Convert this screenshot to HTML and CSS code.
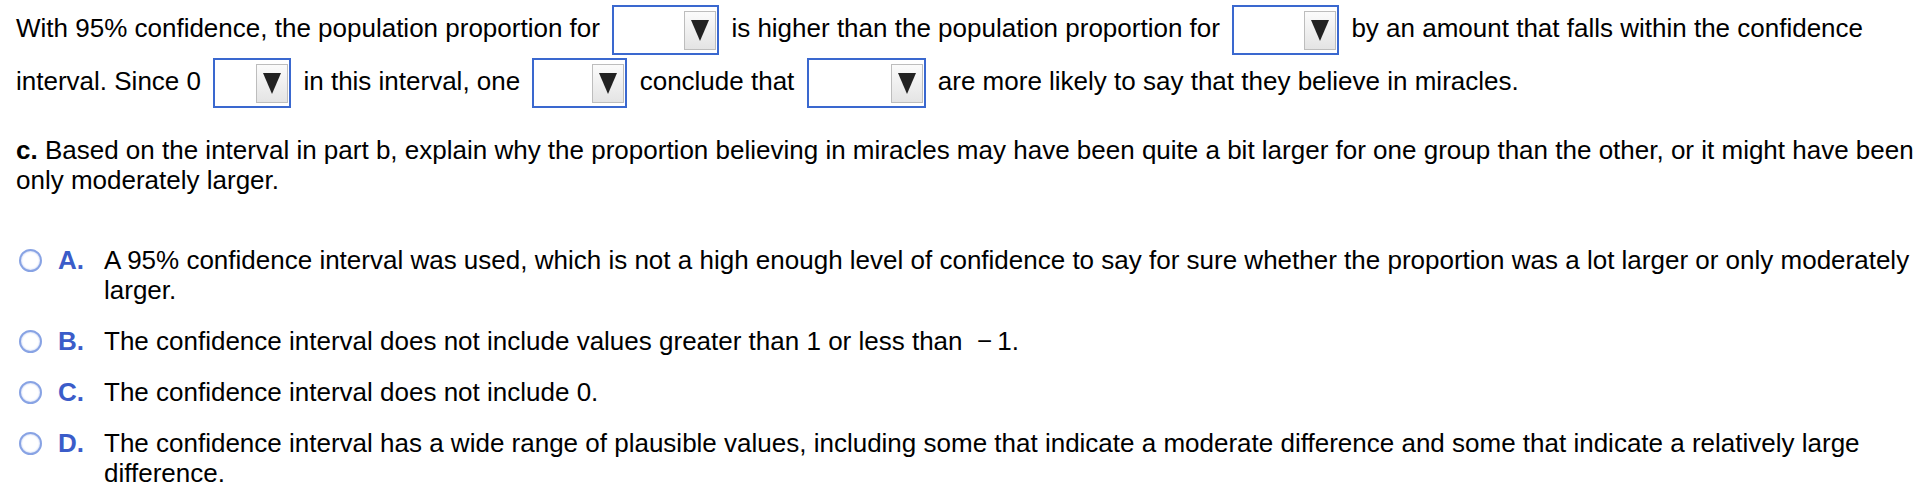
FILE: index.html
```html
<!DOCTYPE html>
<html>
<head>
<meta charset="utf-8">
<link rel="stylesheet" href="styles.css">
</head>
<body>
<div class="page">
  <p class="fill">With 95% confidence, the population proportion for <span class="dd dd-107"><span class="btn"><span class="tri"></span></span></span> is higher than the population proportion for <span class="dd dd-107"><span class="btn"><span class="tri"></span></span></span> by an amount that falls within the confidence interval. Since 0 <span class="dd dd-78"><span class="btn"><span class="tri"></span></span></span> in this interval, one <span class="dd dd-95"><span class="btn"><span class="tri"></span></span></span> conclude that <span class="dd dd-119"><span class="btn"><span class="tri"></span></span></span> are more likely to say that they believe in miracles.</p>

  <p class="question"><b>c.</b> Based on the interval in part b, explain why the proportion believing in miracles may have been quite a bit larger for one group than the other, or it might have been only moderately larger.</p>

  <ul class="options">
    <li class="option"><span class="radio"></span><span class="letter">A.</span><span class="text">A 95% confidence interval was used, which is not a high enough level of confidence to say for sure whether the proportion was a lot larger or only moderately larger.</span></li>
    <li class="option"><span class="radio"></span><span class="letter">B.</span><span class="text">The confidence interval does not include values greater than 1 or less than&nbsp; −&thinsp;1.</span></li>
    <li class="option"><span class="radio"></span><span class="letter">C.</span><span class="text">The confidence interval does not include 0.</span></li>
    <li class="option"><span class="radio"></span><span class="letter">D.</span><span class="text">The confidence interval has a wide range of plausible values, including some that indicate a moderate difference and some that indicate a relatively large difference.</span></li>
  </ul>
</div>
</body>
</html>
```

FILE: styles.css
```css
* { box-sizing: border-box; }

body {
  margin: 0;
  background: #fff;
  color: #000;
  font-family: "Liberation Sans", Arial, Helvetica, sans-serif;
  font-size: 26px;
}

.page {
  padding: 2px 4px 0 16px;
}

.fill {
  margin: 0;
  line-height: 52px;
}

.dd {
  display: inline-flex;
  justify-content: flex-end;
  align-items: center;
  height: 50px;
  margin: 0 5px;
  padding-right: 1px;
  border: 2px solid #3a68cf;
  background: #fff;
  vertical-align: middle;
}

.dd-107 { width: 107px; }
.dd-78 { width: 78px; }
.dd-95 { width: 95px; }
.dd-119 { width: 119px; }

.btn {
  display: flex;
  align-items: center;
  justify-content: center;
  width: 32px;
  height: 39px;
  border: 1px solid #bdbdbd;
  background: linear-gradient(#fbfbfb, #e4e4e4);
}

.tri {
  width: 0;
  height: 0;
  border-left: 9px solid transparent;
  border-right: 9px solid transparent;
  border-top: 21px solid #222;
}

.question {
  margin: 27px 0 0;
  line-height: 30px;
}

.options {
  list-style: none;
  margin: 50px 0 0;
  padding: 0;
  display: flex;
  flex-direction: column;
  gap: 21px;
}

.option {
  display: flex;
  align-items: flex-start;
  line-height: 30px;
  margin-left: 3px;
}

.radio {
  flex: none;
  width: 23px;
  height: 23px;
  margin-top: 4px;
  margin-right: 16px;
  border-radius: 50%;
  border: 2px solid #88a3e4;
  background: radial-gradient(circle, #fff 55%, #e9eefa 100%);
  box-shadow: inset 0 0 2px #b7c7ef;
}

.letter {
  flex: none;
  width: 46px;
  font-weight: bold;
  color: #3b5cc9;
}

.text {
  flex: 1;
}
```
